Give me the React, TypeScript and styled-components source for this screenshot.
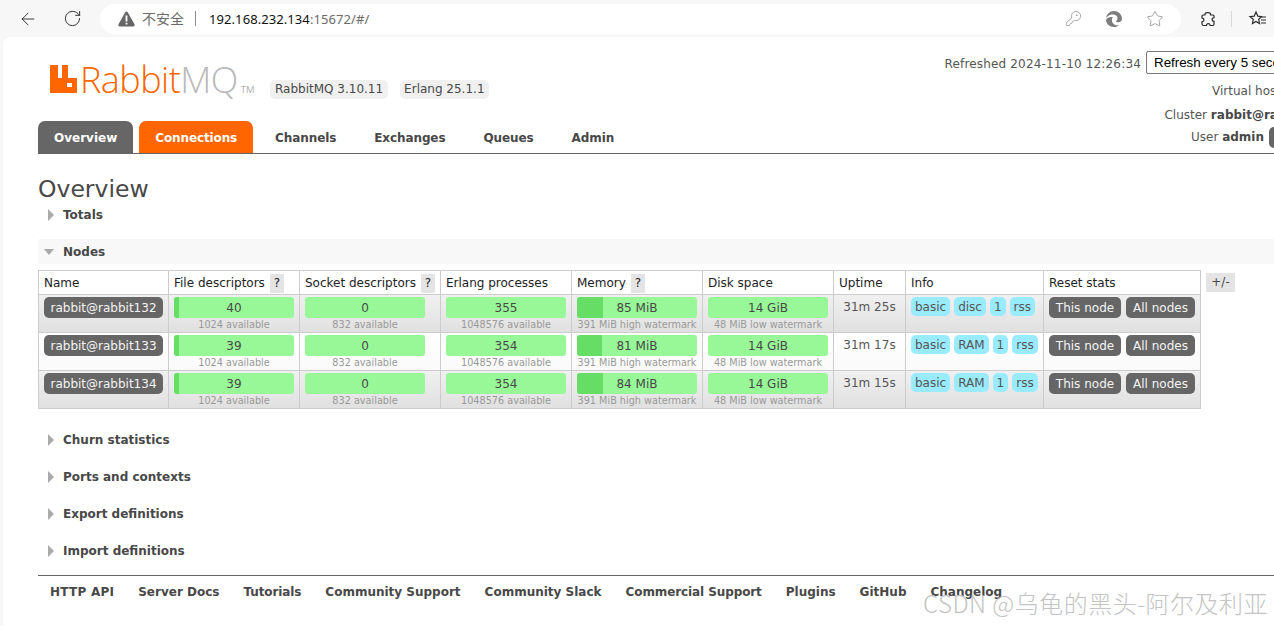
import React from "react";
import styled, { createGlobalStyle } from "styled-components";
import { ArrowLeft, RotateCw, Star, KeyRound } from "lucide-react";

const Global = createGlobalStyle`
  html, body { margin: 0; padding: 0; background: #f7f7f7; }
  body { font-family: "DejaVu Sans", Verdana, sans-serif; font-size: 12px; color: #484848; }
`;

const Screen = styled.div`
  position: relative;
  width: 1274px;
  height: 626px;
  overflow: hidden;
  background: #f7f7f7;
`;

const Chrome = styled.div`
  display: flex;
  align-items: center;
  height: 37px;
  padding-left: 18px;
  box-sizing: border-box;
  width: 1330px;
`;
const ChromeBtn = styled.span`
  display: flex;
  width: 20px;
  height: 20px;
  margin-right: 24px;
  align-items: center;
  justify-content: center;
  color: #2b2b2b;
`;
const Omnibox = styled.div`
  display: flex;
  align-items: center;
  width: 1081px;
  height: 30px;
  margin-left: -6px;
  border-radius: 15px;
  background: #fff;
  padding: 0 17px 0 18px;
  box-sizing: border-box;
  font-family: "Noto Sans", "Noto Sans CJK SC", sans-serif;
  font-size: 13px;
  letter-spacing: 0.08px;
  color: #6b6b6b;
`;
const Insecure = styled.span`
  display: flex;
  align-items: center;
  gap: 7px;
  padding-right: 11px;
  border-right: 1px solid #8a8a8a;
  height: 15px;
  margin-right: 13px;
  font-family: "Noto Sans CJK SC", sans-serif;
  font-size: 14px;
  letter-spacing: 0;
  line-height: 15px;
`;
const Host = styled.span`
  color: #111;
`;
const OmniIcons = styled.span`
  display: flex;
  align-items: center;
  gap: 23px;
  margin-left: auto;
  color: #8f8f8f;
`;
const ChromeRight = styled.span`
  display: flex;
  align-items: center;
  margin-left: 19px;
  color: #2b2b2b;
`;
const Divider = styled.span`
  width: 1px;
  height: 16px;
  background: #d8d8d8;
  margin: 0 16px 0 15px;
`;

const Page = styled.div`
  margin-left: 3px;
  height: 589px;
  background: #fff;
  border-top-left-radius: 8px;
  padding-left: 35px;
  box-sizing: border-box;
`;
const Inner = styled.div`
  width: 1292px;
`;
const Header = styled.header`
  display: flex;
  justify-content: space-between;
  height: 84px;
`;
const Brand = styled.div`
  display: flex;
  align-items: flex-start;
  padding: 28px 0 0 12px;
`;
const LogoMark = styled.svg`
  width: 27px;
  height: 28px;
  flex: none;
`;
const LogoText = styled.span`
  font-family: "Open Sans", sans-serif;
  font-weight: 300;
  font-size: 36px;
  line-height: 30px;
  letter-spacing: -0.55px;
  margin-left: 3px;
  color: #ff6600;
`;
const LogoGrey = styled.span`
  color: #b9b9b9;
`;
const Tm = styled.span`
  font-family: "Open Sans", sans-serif;
  font-size: 9.5px;
  color: #b0b0b0;
  margin: 18px 4px 0 3px;
`;
const Version = styled.span`
  background: #f0f0f0;
  border-radius: 5px;
  height: 19px;
  line-height: 19px;
  padding: 0 4.5px;
  margin: 15px 0 0 12px;
  font-size: 12px;
  color: #484848;
  white-space: nowrap;
`;
const Meta = styled.div`
  display: flex;
  flex-direction: column;
  align-items: flex-end;
  padding-top: 14px;
  font-size: 12px;
  color: #555;
  white-space: nowrap;
`;
const MetaRow = styled.div<{ $h: number }>`
  display: flex;
  flex: none;
  align-items: center;
  gap: 5px;
  height: ${(p) => p.$h}px;
  b {
    color: #484848;
  }
`;
const Stamp = styled.span`
  letter-spacing: 0.17px;
  padding-top: 2px;
`;
const Select = styled.select`
  height: 23px;
  width: 184px;
  font-family: "Liberation Sans", sans-serif;
  font-size: 13.33px;
  padding: 0 3px;
  background: #fff;
  border: 1px solid #767676;
  border-radius: 2px;
  color: #000;
`;
const SmallSelect = styled(Select)`
  width: 44px;
  height: 20px;
`;
const LogOut = styled.span`
  background: #666;
  color: #fff;
  border-radius: 5px;
  width: 61px;
  height: 21px;
  line-height: 21px;
  text-align: center;
  font-size: 12px;
`;

const Nav = styled.nav`
  display: flex;
  height: 32px;
  border-bottom: 1px solid #666;
`;
const Tab = styled.a<{ $bg?: string; $track?: number }>`
  display: block;
  height: 32px;
  line-height: 34px;
  padding: 0 16px;
  margin-right: 6px;
  border-radius: 7px 7px 0 0;
  font-weight: 700;
  font-size: 12px;
  letter-spacing: ${(p) => p.$track ?? -0.1}px;
  color: ${(p) => (p.$bg ? "#fff" : "#484848")};
  background: ${(p) => p.$bg || "transparent"};
`;

const Title = styled.h1`
  margin: 0;
  padding-top: 20px;
  height: 30px;
  line-height: 30px;
  font-size: 23.5px;
  font-weight: 400;
  color: #484848;
`;
const Section = styled.div<{ $open?: boolean; $h?: number }>`
  display: flex;
  align-items: center;
  height: ${(p) => p.$h || 25}px;
  padding-left: ${(p) => (p.$open ? 6 : 10)}px;
  background: ${(p) => (p.$open ? "#f8f8f8" : "transparent")};
  font-weight: 700;
  font-size: 12px;
  color: #484848;
`;
const Closed = styled.span`
  width: 0;
  height: 0;
  border-style: solid;
  border-width: 6px 0 6px 6px;
  border-color: transparent transparent transparent #aaa;
  margin-right: 9px;
`;
const Opened = styled.span`
  width: 0;
  height: 0;
  border-style: solid;
  border-width: 6px 5.5px 0 5.5px;
  border-color: #aaa transparent transparent transparent;
  margin-right: 9px;
`;
const TotalsWrap = styled.div`
  margin-top: 1px;
  margin-bottom: 14px;
`;
const TableRow = styled.div`
  display: flex;
  align-items: flex-start;
  margin-top: 6px;
  margin-bottom: 18px;
`;
const Table = styled.table`
  border-collapse: collapse;
  table-layout: fixed;
  width: 1162px;
  font-size: 12px;
`;
const Th = styled.th<{ $w: number }>`
  width: ${(p) => p.$w}px;
  height: 24px;
  padding: 0 5px;
  box-sizing: border-box;
  border: 1px solid #ccc;
  text-align: left;
  font-weight: 400;
  color: #222;
  background: #fff;
  white-space: nowrap;
`;
const Help = styled.span`
  display: inline-block;
  width: 14px;
  height: 19px;
  line-height: 19px;
  margin: -3px 0 -3px 5px;
  text-align: center;
  background: #e4e4e4;
`;
const Tr = styled.tr<{ $alt?: boolean }>`
  background: ${(p) =>
    p.$alt
      ? "linear-gradient(#ffffff, #fafafa)"
      : "linear-gradient(#f0f0f0, #e0e0e0)"};
`;
const Td = styled.td`
  height: 38px;
  padding: 2px 5px 0;
  box-sizing: border-box;
  border: 1px solid #ccc;
  vertical-align: top;
  white-space: nowrap;
`;
const NodeBtn = styled.span`
  display: block;
  height: 21px;
  line-height: 22px;
  border-radius: 5px;
  background: #666;
  color: #f4f4f4;
  text-align: center;
`;
const Bar = styled.div`
  position: relative;
  height: 21px;
  line-height: 22px;
  border-radius: 3px;
  overflow: hidden;
  background: #98f898;
  text-align: center;
  color: #484848;
`;
const BarFill = styled.span`
  position: absolute;
  left: 0;
  top: 0;
  bottom: 0;
  background: #66de66;
`;
const BarLabel = styled.span`
  position: relative;
`;
const Sub = styled.div`
  height: 12px;
  line-height: 12px;
  padding-top: 1px;
  font-size: 9.7px;
  text-align: center;
  color: #999;
`;
const SocketCell = styled.div`
  width: 120px;
`;
const Uptime = styled.div`
  height: 20px;
  line-height: 20px;
  text-align: center;
  color: #555;
`;
const Tags = styled.div`
  display: flex;
  gap: 4px;
`;
const Tag = styled.span`
  height: 19px;
  line-height: 20px;
  padding: 0 4px;
  border-radius: 5px;
  background: #99ebff;
  color: #555;
`;
const Actions = styled.div`
  display: flex;
  gap: 5px;
`;
const Action = styled.span<{ $w: number }>`
  width: ${(p) => p.$w}px;
  height: 21px;
  line-height: 22px;
  text-align: center;
  border-radius: 5px;
  background: #666;
  color: #f4f4f4;
`;
const PlusMinus = styled.span`
  margin: 3px 0 0 5px;
  width: 29px;
  height: 19px;
  line-height: 19px;
  text-align: center;
  background: #e4e4e4;
  color: #484848;
`;
const Collapsed = styled.div`
  display: flex;
  flex-direction: column;
  gap: 12px;
`;
const Footer = styled.footer`
  display: flex;
  gap: 24px;
  margin-top: 12px;
  padding: 9px 0 0 12px;
  border-top: 1px solid #666;
  font-weight: 700;
  font-size: 12px;
  color: #484848;
  white-space: nowrap;
  span:first-child {
    letter-spacing: 0.25px;
  }
  span:nth-child(3) {
    letter-spacing: -0.1px;
  }
  span:nth-child(6) {
    letter-spacing: -0.1px;
  }
`;
const Watermark = styled.div`
  position: absolute;
  left: 923px;
  top: 586px;
  font-family: "Noto Sans CJK SC", sans-serif;
  font-size: 24px;
  line-height: 34px;
  font-weight: 300;
  letter-spacing: 0.5px;
  color: #c4c4c4;
  text-shadow: 1px 1px 0 #fff;
  white-space: nowrap;
`;

const columns: [string, number, boolean][] = [
  ["Name", 130, false],
  ["File descriptors", 131, true],
  ["Socket descriptors", 141, true],
  ["Erlang processes", 131, false],
  ["Memory", 131, true],
  ["Disk space", 131, false],
  ["Uptime", 72, false],
  ["Info", 138, false],
  ["Reset stats", 157, false],
];

const nodes = [
  { name: "rabbit@rabbit132", fd: "40", fdp: 4, proc: "355", mem: "85 MiB", memp: 22, up: "31m 25s", tags: ["basic", "disc", "1", "rss"] },
  { name: "rabbit@rabbit133", fd: "39", fdp: 4, proc: "354", mem: "81 MiB", memp: 21, up: "31m 17s", tags: ["basic", "RAM", "1", "rss"] },
  { name: "rabbit@rabbit134", fd: "39", fdp: 4, proc: "354", mem: "84 MiB", memp: 22, up: "31m 15s", tags: ["basic", "RAM", "1", "rss"] },
];

const Meter = ({ pct, label }: { pct: number; label: string }) => (
  <Bar>
    <BarFill style={{ width: `${pct}%` }} />
    <BarLabel>{label}</BarLabel>
  </Bar>
);

export default function App() {
  return (
    <Screen>
      <Global />
      <Chrome>
        <ChromeBtn><ArrowLeft size={24} strokeWidth={1.1} /></ChromeBtn>
        <ChromeBtn><RotateCw size={19} strokeWidth={1.2} /></ChromeBtn>
        <Omnibox>
          <Insecure>
            <svg width="17" height="16" viewBox="0 0 17 16">
              <path d="M8.500 0.500c.5 0 .9.300 1.200.800l6.800 12c.5 1-.1 2.200-1.200 2.200H1.700C.6 15.500 0 14.300.5 13.300l6.800-12c.3-.5.700-.8 1.200-.8z" fill="#666" />
              <path d="M7.600 4.500h1.800v6H7.600zM7.600 11.700h1.800v1.800H7.600z" fill="#fff" />
            </svg>
            不安全
          </Insecure>
          <Host>192.168.232.134</Host>:15672/#/
          <OmniIcons>
            <KeyRound size={17} strokeWidth={1.1} />
            <svg width="18" height="18" viewBox="0 0 18 18">
              <path d="M1 9a8 8 0 0 1 16 0c0 2-1.500 3.200-3.500 3.200-1.200 0-2.200-.4-2.600-1 1-.6 1.600-1.500 1.600-2.700C12.500 6 10.500 4.500 8 4.500 4.500 4.500 1.500 6.500 1 9z" fill="#7d7d7d" />
              <path d="M1 10c.2 4 3.500 7 8 7 2 0 3.800-.7 5-1.800-1.200.3-2.800.2-4.200-.5-2.100-1-3.200-3-2.800-5.500.1-.8.4-1.400.8-2C4.500 6.800 2 7.800 1 10z" fill="#7d7d7d" />
            </svg>
            <Star size={18} strokeWidth={1.1} />
          </OmniIcons>
        </Omnibox>
        <ChromeRight>
          <svg width="16" height="16" viewBox="0 0 16 16" fill="none" stroke="#2b2b2b" strokeWidth="1.2" strokeLinejoin="round">
            <path d="M5 3.200C5 1 10.500 1 10.500 3.200V4h2.500a1 1 0 0 1 1 1v1.800c-2.500-.4-2.500 3.800 0 3.400V13a1.500 1.500 0 0 1-1.500 1.500H10c.6-2.500-4-2.500-3.400 0H3.500A1.500 1.500 0 0 1 2 13V10.500c2.500.6 2.500-3.800 0-3.400V5a1 1 0 0 1 1-1h2z" />
          </svg>
          <Divider />
          <svg width="18" height="18" viewBox="0 0 18 18" fill="none" stroke="#2b2b2b" strokeWidth="1.2">
            <path d="M8 2l1.800 4.200 3.700.4-2.800 2.700.8 4.200L8 11.400 4.500 13.500l.8-4.200L2 6.600l4.200-.4z" />
            <path d="M13 7h5M13 10h5M13 13h5" />
          </svg>
        </ChromeRight>
      </Chrome>
      <Page>
        <Inner>
          <Header>
            <Brand>
              <LogoMark viewBox="0 0 27 28">
                <path
                  fillRule="evenodd"
                  fill="#ff6600"
                  d="M0 0h8v13h4V0h6v13h9v15H0zM17 18v4h5v-4z"
                />
              </LogoMark>
              <LogoText>Rabbit<LogoGrey>MQ</LogoGrey></LogoText>
              <Tm>TM</Tm>
              <Version>RabbitMQ 3.10.11</Version>
              <Version>Erlang 25.1.1</Version>
            </Brand>
            <Meta>
              <MetaRow $h={23}>
                <Stamp>Refreshed 2024-11-10 12:26:34</Stamp>
                <Select defaultValue="5"><option value="5">Refresh every 5 seconds</option></Select>
              </MetaRow>
              <MetaRow $h={34}>
                Virtual host
                <SmallSelect defaultValue="all"><option value="all">All</option></SmallSelect>
              </MetaRow>
              <MetaRow $h={14}>
                <span>Cluster <b>rabbit@rabbit132</b></span>
              </MetaRow>
              <MetaRow $h={30}>
                <span>User <b>admin</b></span>
                <LogOut>Log out</LogOut>
              </MetaRow>
            </Meta>
          </Header>
          <Nav>
            <Tab $bg="#666" $track={0}>Overview</Tab>
            <Tab $bg="#ff6600" $track={-0.12}>Connections</Tab>
            <Tab>Channels</Tab>
            <Tab>Exchanges</Tab>
            <Tab>Queues</Tab>
            <Tab>Admin</Tab>
          </Nav>
          <Title>Overview</Title>
          <TotalsWrap>
            <Section $h={20}><Closed />Totals</Section>
          </TotalsWrap>
          <Section $open><Opened />Nodes</Section>
          <TableRow>
            <Table>
              <thead>
                <tr>
                  {columns.map(([label, w, help]) => (
                    <Th key={label} $w={w}>
                      {label}
                      {help && <Help>?</Help>}
                    </Th>
                  ))}
                </tr>
              </thead>
              <tbody>
                {nodes.map((n, i) => (
                  <Tr key={n.name} $alt={i === 1}>
                    <Td><NodeBtn>{n.name}</NodeBtn></Td>
                    <Td>
                      <Meter pct={n.fdp} label={n.fd} />
                      <Sub>1024 available</Sub>
                    </Td>
                    <Td>
                      <SocketCell>
                        <Meter pct={0} label="0" />
                        <Sub>832 available</Sub>
                      </SocketCell>
                    </Td>
                    <Td>
                      <Meter pct={0} label={n.proc} />
                      <Sub>1048576 available</Sub>
                    </Td>
                    <Td>
                      <Meter pct={n.memp} label={n.mem} />
                      <Sub>391 MiB high watermark</Sub>
                    </Td>
                    <Td>
                      <Meter pct={0} label="14 GiB" />
                      <Sub>48 MiB low watermark</Sub>
                    </Td>
                    <Td><Uptime>{n.up}</Uptime></Td>
                    <Td>
                      <Tags>{n.tags.map((t) => <Tag key={t}>{t}</Tag>)}</Tags>
                    </Td>
                    <Td>
                      <Actions>
                        <Action $w={72}>This node</Action>
                        <Action $w={69}>All nodes</Action>
                      </Actions>
                    </Td>
                  </Tr>
                ))}
              </tbody>
            </Table>
            <PlusMinus>+/-</PlusMinus>
          </TableRow>
          <Collapsed>
            <Section><Closed />Churn statistics</Section>
            <Section><Closed />Ports and contexts</Section>
            <Section><Closed />Export definitions</Section>
            <Section><Closed />Import definitions</Section>
          </Collapsed>
          <Footer>
            <span>HTTP API</span>
            <span>Server Docs</span>
            <span>Tutorials</span>
            <span>Community Support</span>
            <span>Community Slack</span>
            <span>Commercial Support</span>
            <span>Plugins</span>
            <span>GitHub</span>
            <span>Changelog</span>
          </Footer>
        </Inner>
      </Page>
      <Watermark>CSDN @乌龟的黑头-阿尔及利亚</Watermark>
    </Screen>
  );
}
